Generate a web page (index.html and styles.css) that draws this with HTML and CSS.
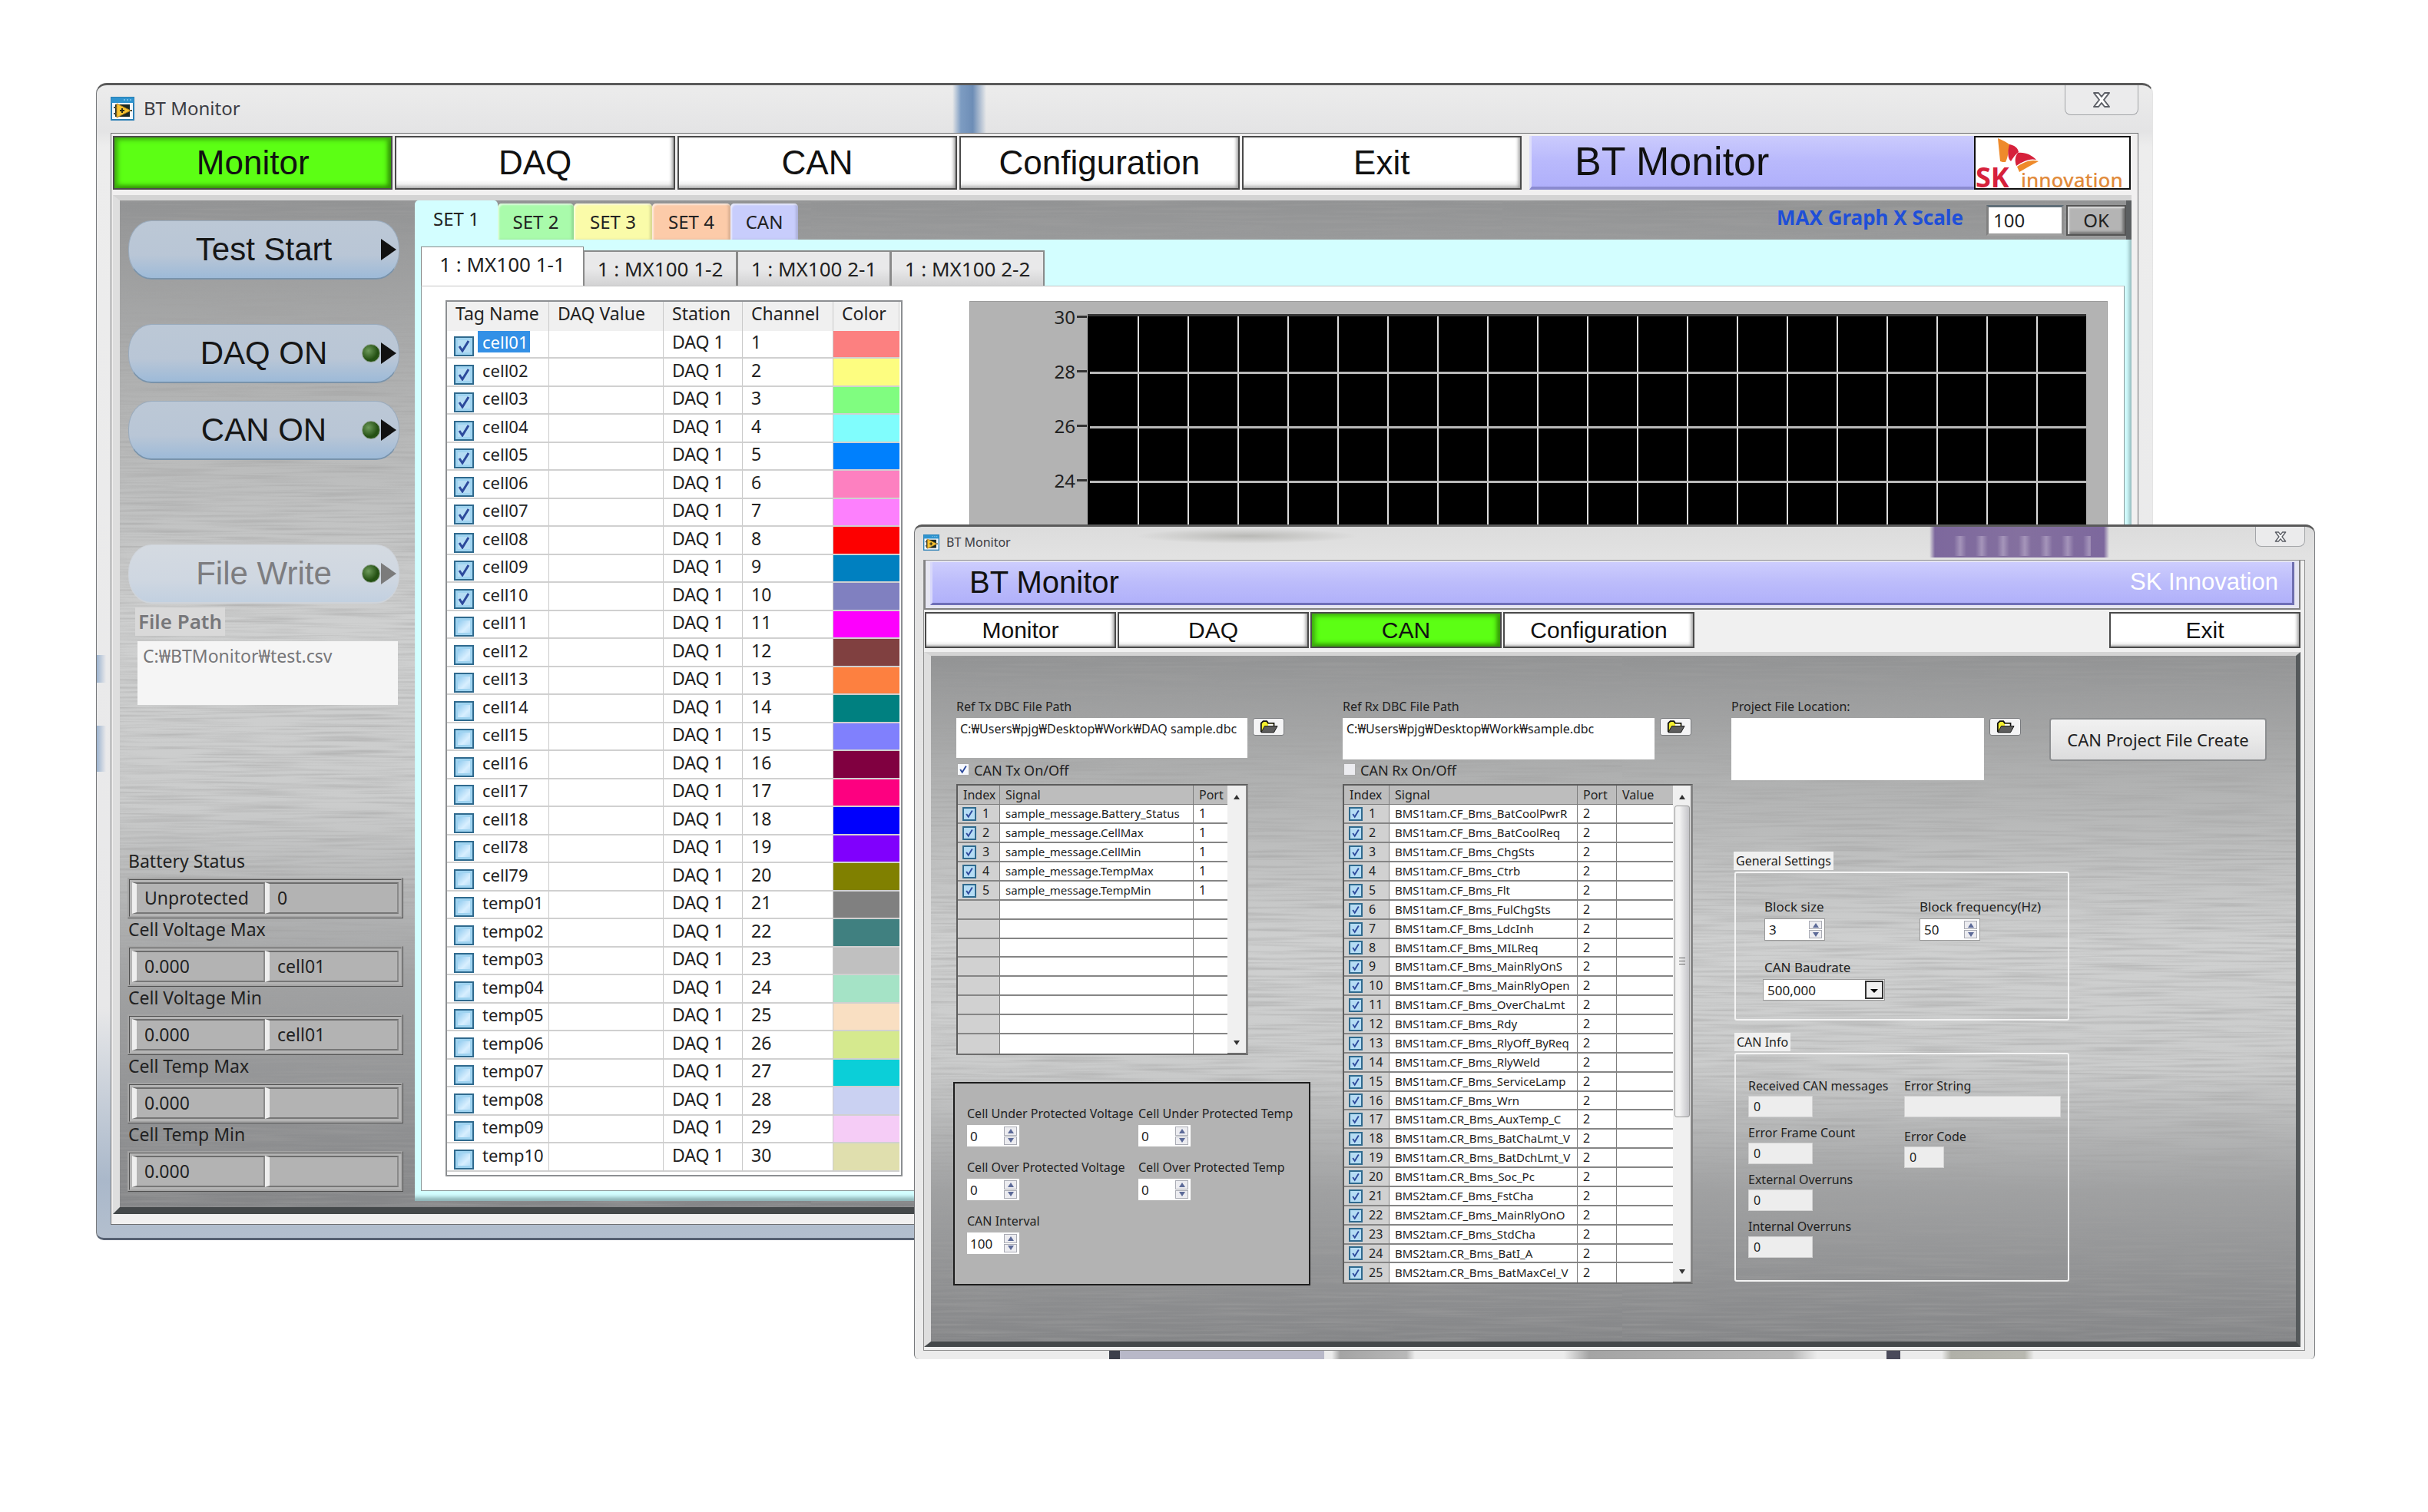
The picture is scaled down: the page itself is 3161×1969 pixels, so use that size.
FILE: index.html
```html
<!DOCTYPE html>
<html lang="en">
<head>
<meta charset="utf-8">
<title>BT Monitor</title>
<link rel="stylesheet" href="styles.css">
</head>
<body>
<svg class="defs" width="0" height="0" aria-hidden="true">
  <symbol id="app-icon" viewBox="0 0 31 31">
    <rect x="1" y="1" width="29" height="29" fill="#f4f8fb" stroke="#2b7fb5" stroke-width="2"/>
    <rect x="1" y="1" width="29" height="7" fill="#2f94cf"/>
    <path d="M17 4h2M21 4h2M25 4h2" stroke="#bfe3f7" stroke-width="1"/>
    <rect x="6" y="10" width="19" height="16" fill="#1c2a26"/>
    <path d="M4 14h5M4 22h5M22 18h6" stroke="#4a4a3a" stroke-width="2"/>
    <path d="M8 9l18 9-18 9z" fill="#f7c433" stroke="#b5801c" stroke-width="1"/>
    <path d="M12 18h6M15 15v6" stroke="#2d2d1a" stroke-width="2"/>
  </symbol>
  <symbol id="close-icon" viewBox="0 0 24 20">
    <path d="M2 1h6l4 5 4-5h6l-7 9 7 9h-6l-4-5-4 5H2l7-9z" fill="#fff" stroke="#5c5f66" stroke-width="2" stroke-linejoin="round"/>
  </symbol>
  <symbol id="folder-icon" viewBox="0 0 26 18">
    <path d="M2 16V4l3-3h5l2 3h8v4" fill="#f3ee2e" stroke="#111" stroke-width="2"/>
    <path d="M12 5h7v3h-7z" fill="#fff"/>
    <path d="M2 17L7 8h18l-5 9z" fill="#5d5d5d" stroke="#111" stroke-width="1"/>
  </symbol>
  <symbol id="up-icon" viewBox="0 0 8 6"><path d="M4 0l4 6H0z"/></symbol>
  <symbol id="down-icon" viewBox="0 0 8 6"><path d="M0 0h8L4 6z"/></symbol>
</svg>

<main class="desktop">
  <section class="window monitor">
    <header class="titlebar">
      <svg class="app-icon"><use href="#app-icon"/></svg>
      <span class="title">BT Monitor</span>
      <button class="close" aria-label="Close"><svg><use href="#close-icon"/></svg></button>
    </header>
    <div class="frame">
      <nav class="nav">
        <button class="nav-btn active">Monitor</button>
        <button class="nav-btn">DAQ</button>
        <button class="nav-btn">CAN</button>
        <button class="nav-btn">Configuration</button>
        <button class="nav-btn">Exit</button>
        <h1 class="brand">BT Monitor</h1>
        <svg class="logo" viewBox="0 0 204 70">
          <path d="M31 3c7 3 13 6 16 9-3 7-2 15-6 22-3 0-5 0-7-1z" fill="#ee8a2b"/>
          <path d="M46 11c6 1 11 4 12 10-4 3-7 7-10 12-5-4-4-14-2-22z" fill="#d6213b"/>
          <path d="M84 33c-9 5-17 9-25 14l-3-7c9-6 18-10 28-7z" fill="#ee8a2b"/>
          <path d="M57 22c10-1 18 3 24 9-9-2-17 2-26 8-2-6-2-12 2-17z" fill="#d6213b"/>
          <text class="logo-sk" x="2" y="67">SK</text>
          <text class="logo-name" x="61" y="67">innovation</text>
        </svg>
      </nav>
      <div class="panel">
        <aside class="sidebar">
          <button class="pill">Test Start<svg class="play" viewBox="0 0 20 28"><path d="M0 0l20 14L0 28z"/></svg></button>
          <button class="pill daq-on">DAQ ON<i class="led"></i><svg class="play" viewBox="0 0 20 28"><path d="M0 0l20 14L0 28z"/></svg></button>
          <button class="pill can-on">CAN ON<i class="led"></i><svg class="play" viewBox="0 0 20 28"><path d="M0 0l20 14L0 28z"/></svg></button>
          <div class="file-write">
            <button class="pill" disabled>File Write<i class="led"></i><svg class="play" viewBox="0 0 20 28"><path d="M0 0l20 14L0 28z"/></svg></button>
            <label class="file-label" for="file-path">File Path</label>
            <textarea id="file-path" class="file-path" disabled>C:₩BTMonitor₩test.csv</textarea>
          </div>
          <div class="readouts">
            <span class="readout-label">Battery Status</span>
            <div class="readout"><output>Unprotected</output><output>0</output></div>
            <span class="readout-label">Cell Voltage Max</span>
            <div class="readout"><output>0.000</output><output>cell01</output></div>
            <span class="readout-label">Cell Voltage Min</span>
            <div class="readout"><output>0.000</output><output>cell01</output></div>
            <span class="readout-label">Cell Temp Max</span>
            <div class="readout"><output>0.000</output><output></output></div>
            <span class="readout-label">Cell Temp Min</span>
            <div class="readout"><output>0.000</output><output></output></div>
          </div>
        </aside>
        <div class="sets">
          <div class="set-bar">
            <div class="set-tabs" role="tablist">
              <button class="set-tab set-1" role="tab">SET 1</button>
              <button class="set-tab set-2" role="tab">SET 2</button>
              <button class="set-tab set-3" role="tab">SET 3</button>
              <button class="set-tab set-4" role="tab">SET 4</button>
              <button class="set-tab set-can" role="tab">CAN</button>
            </div>
            <label class="scale-label" for="scale">MAX Graph X Scale</label>
            <input id="scale" class="scale-input" value="100">
            <button class="ok">OK</button>
          </div>
          <div class="set-body">
            <div class="unit-tabs" role="tablist">
              <button class="unit-tab selected" role="tab">1 : MX100 1-1</button>
              <button class="unit-tab" role="tab">1 : MX100 1-2</button>
              <button class="unit-tab" role="tab">1 : MX100 2-1</button>
              <button class="unit-tab" role="tab">1 : MX100 2-2</button>
            </div>
            <div class="pane">
              <table class="tags">
                <thead><tr><th>Tag Name</th><th>DAQ Value</th><th>Station</th><th>Channel</th><th>Color</th></tr></thead>
                <tbody id="tag-rows"></tbody>
              </table>
              <div class="chart">
                <ol class="axis"><li>30</li><li>28</li><li>26</li><li>24</li></ol>
                <div class="plot"></div>
              </div>
            </div>
          </div>
        </div>
      </div>
    </div>
  </section>

  <section class="window can">
    <header class="titlebar">
      <svg class="app-icon"><use href="#app-icon"/></svg>
      <span class="title">BT Monitor</span>
      <button class="close" aria-label="Close"><svg><use href="#close-icon"/></svg></button>
    </header>
    <div class="frame">
      <div class="banner"><div class="banner-face"><h2>BT Monitor</h2><span>SK Innovation</span></div></div>
      <nav class="nav">
        <button class="nav-btn">Monitor</button>
        <button class="nav-btn">DAQ</button>
        <button class="nav-btn active">CAN</button>
        <button class="nav-btn">Configuration</button>
        <button class="nav-btn exit">Exit</button>
      </nav>
      <div class="panel">
        <div class="column">
          <label for="tx-path">Ref Tx DBC File Path</label>
          <div class="path-row">
            <textarea id="tx-path" class="tx-path">C:₩Users₩pjg₩Desktop₩Work₩DAQ sample.dbc</textarea>
            <button class="browse" aria-label="Browse Tx file"><svg><use href="#folder-icon"/></svg></button>
          </div>
          <label class="toggle"><input type="checkbox" checked>CAN Tx On/Off</label>
          <div class="grid-box tx-box">
            <table class="signals tx">
              <thead><tr><th>Index</th><th>Signal</th><th>Port</th></tr></thead>
              <tbody id="tx-rows"></tbody>
            </table>
            <div class="scroll"><svg><use href="#up-icon"/></svg><svg><use href="#down-icon"/></svg></div>
          </div>
          <div class="protect">
            <div class="field"><label for="cuv">Cell Under Protected Voltage</label><span class="spin"><input id="cuv" value="0"><span class="arrows"><button aria-label="Up"><svg><use href="#up-icon"/></svg></button><button aria-label="Down"><svg><use href="#down-icon"/></svg></button></span></span></div>
            <div class="field"><label for="cut">Cell Under Protected Temp</label><span class="spin"><input id="cut" value="0"><span class="arrows"><button aria-label="Up"><svg><use href="#up-icon"/></svg></button><button aria-label="Down"><svg><use href="#down-icon"/></svg></button></span></span></div>
            <div class="field"><label for="cov">Cell Over Protected Voltage</label><span class="spin"><input id="cov" value="0"><span class="arrows"><button aria-label="Up"><svg><use href="#up-icon"/></svg></button><button aria-label="Down"><svg><use href="#down-icon"/></svg></button></span></span></div>
            <div class="field"><label for="cot">Cell Over Protected Temp</label><span class="spin"><input id="cot" value="0"><span class="arrows"><button aria-label="Up"><svg><use href="#up-icon"/></svg></button><button aria-label="Down"><svg><use href="#down-icon"/></svg></button></span></span></div>
            <div class="field"><label for="interval">CAN Interval</label><span class="spin"><input id="interval" value="100"><span class="arrows"><button aria-label="Up"><svg><use href="#up-icon"/></svg></button><button aria-label="Down"><svg><use href="#down-icon"/></svg></button></span></span></div>
          </div>
        </div>

        <div class="column">
          <label for="rx-path">Ref Rx DBC File Path</label>
          <div class="path-row">
            <textarea id="rx-path" class="rx-path">C:₩Users₩pjg₩Desktop₩Work₩sample.dbc</textarea>
            <button class="browse" aria-label="Browse Rx file"><svg><use href="#folder-icon"/></svg></button>
          </div>
          <label class="toggle"><input type="checkbox">CAN Rx On/Off</label>
          <div class="grid-box rx-box">
            <table class="signals rx">
              <thead><tr><th>Index</th><th>Signal</th><th>Port</th><th>Value</th></tr></thead>
              <tbody id="rx-rows"></tbody>
            </table>
            <div class="scroll"><svg><use href="#up-icon"/></svg><div class="thumb"></div><svg><use href="#down-icon"/></svg></div>
          </div>
        </div>

        <div class="column">
          <label for="project-path">Project File Location:</label>
          <div class="path-row">
            <textarea id="project-path" class="project-path"></textarea>
            <button class="browse" aria-label="Browse project file"><svg><use href="#folder-icon"/></svg></button>
            <button class="create">CAN Project File Create</button>
          </div>
          <h3 class="group-title settings-title">General Settings</h3>
          <div class="group settings">
            <div class="field"><label for="block-size">Block size</label><span class="spin"><input id="block-size" value="3"><span class="arrows"><button aria-label="Up"><svg><use href="#up-icon"/></svg></button><button aria-label="Down"><svg><use href="#down-icon"/></svg></button></span></span></div>
            <div class="field"><label for="block-freq">Block frequency(Hz)</label><span class="spin"><input id="block-freq" value="50"><span class="arrows"><button aria-label="Up"><svg><use href="#up-icon"/></svg></button><button aria-label="Down"><svg><use href="#down-icon"/></svg></button></span></span></div>
            <div class="field"><label for="baud">CAN Baudrate</label><select id="baud" class="baud"><option>500,000</option></select></div>
          </div>
          <h3 class="group-title info-title">CAN Info</h3>
          <div class="group info">
            <div class="info-col">
              <div class="field"><label for="received">Received CAN messages</label><input id="received" readonly value="0"></div>
              <div class="field"><label for="frames">Error Frame Count</label><input id="frames" readonly value="0"></div>
              <div class="field"><label for="ext">External Overruns</label><input id="ext" readonly value="0"></div>
              <div class="field"><label for="int">Internal Overruns</label><input id="int" readonly value="0"></div>
            </div>
            <div class="info-col errors">
              <div class="field"><label for="err-str">Error String</label><input id="err-str" class="wide" readonly></div>
              <div class="field"><label for="err-code">Error Code</label><input id="err-code" class="narrow" readonly value="0"></div>
            </div>
          </div>
        </div>
      </div>
    </div>
    <div class="glass-foot"></div>
  </section>
</main>
<script src="rows.js"></script>
</body>
</html>
```
FILE: styles.css
```css
* { box-sizing: border-box; }

body {
  margin: 0;
  background: #fff;
  color: #222;
  font-family: "Noto Sans", "Noto Sans CJK KR", sans-serif;
  font-size: 22px;
}

button, input, textarea, select {
  margin: 0;
  padding: 0;
  border: 0;
  border-radius: 0;
  color: inherit;
  font: inherit;
  outline: 0;
}

h1, h2, h3 { margin: 0; font-weight: 400; }
textarea { display: block; resize: none; overflow: hidden; }
.defs { position: absolute; }
.desktop { position: relative; min-height: 100vh; }

/* windows */
.window {
  position: absolute;
  border: 1px solid #77797c;
  border-top: 3px solid #5a5a5a;
}

.monitor {
  top: 108px;
  left: 125px;
  right: 358px;
  padding: 0 18px 17px;
  border-right-color: #e4e4e4;
  border-bottom: 3px solid #566172;
  border-radius: 14px 14px 10px 10px;
  background:
    linear-gradient(90deg, transparent, #7d9cc2 25%, #6d8db6 60%, transparent) 1114px 0 / 44px 62px no-repeat,
    linear-gradient(90deg, #9db4d0, #e9e9ea) 0 742px / 12px 36px no-repeat,
    linear-gradient(90deg, #9db4d0, #e9e9ea) 0 834px / 12px 60px no-repeat,
    linear-gradient(#ececec 0, #e4e4e5 60px, #ededed 80px, #e8e8e9 80%, #aab8ca 95%, #b3bfce 100%);
}

.can {
  top: 683px;
  left: 1190px;
  right: 147px;
  padding: 0 12px 0 11px;
  border-bottom: 0;
  border-radius: 10px 12px 6px 6px;
  background: linear-gradient(#dcdcdc, #e2e2e2 40px, #ececec);
}

.titlebar { display: flex; align-items: center; }
.titlebar .title { flex: 1; padding-bottom: 3px; color: #3c3c44; }
.close {
  display: flex;
  align-self: flex-start;
  align-items: center;
  justify-content: center;
  border: 1px solid #a3a5a8;
  border-top: 0;
  border-radius: 0 0 8px 8px;
  background: #ebebec;
}

.monitor .titlebar { height: 62px; font-size: 24px; }
.monitor .app-icon { width: 31px; height: 31px; margin: 0 12px 2px 0; }
.monitor .close { width: 96px; height: 39px; }
.monitor .close svg { width: 24px; height: 20px; }

.can .titlebar {
  height: 43px;
  font-size: 16px;
  background:
    radial-gradient(ellipse at center, #b9b9b6, transparent 70%) 276px 2px / 290px 20px no-repeat,
    repeating-linear-gradient(90deg, transparent 0 12px, #b7a9c8aa 20px, transparent 28px) 1330px 12px / 190px 26px no-repeat,
    linear-gradient(90deg, transparent, #7d689d 3%, #84709f 50%, #7d689d 97%, transparent) 1310px 0 / 234px 40px no-repeat;
}
.can .app-icon { width: 21px; height: 21px; margin: 0 9px 2px 0; }
.can .close { width: 65px; height: 26px; }
.can .close svg { width: 16px; height: 14px; }

/* button bars */
.nav-btn {
  border: 2px solid #4a4a4a;
  background: linear-gradient(#fff 84%, #f0f0f0 92%, #b4b4b4);
  box-shadow: inset -4px 0 4px -2px #999;
  color: #111;
  font-family: "Liberation Sans", Arial, sans-serif;
}
.nav-btn.active {
  background: #5cff14;
  box-shadow: inset 6px 0 6px -2px #3faa10, inset 0 5px 6px -2px #43b512, inset -6px 0 6px -2px #2f8a06, inset 0 -6px 6px -3px #2f8a06;
}

/* brushed metal */
.panel {
  border-style: solid;
  border-color: #d4d4d4 #55595b #44484a #dedede;
  background:
    url("data:image/svg+xml,%3Csvg xmlns='http://www.w3.org/2000/svg' width='900' height='450'%3E%3Cfilter id='n'%3E%3CfeTurbulence type='fractalNoise' baseFrequency='.008 .3' numOctaves='2' seed='4' stitchTiles='stitch'/%3E%3CfeColorMatrix values='0 0 0 0 .35 0 0 0 0 .35 0 0 0 0 .35 1.1 0 0 0 -.45'/%3E%3C/filter%3E%3Crect width='900' height='450' filter='url(%23n)'/%3E%3C/svg%3E"),
    linear-gradient(#929394, #b0b1b1 18%, #cfd0d0 42%, #cbcccc 60%, #a0a1a2 78%, #858688);
}

/* monitor window */
.monitor .frame {
  padding: 3px 9px 13px 2px;
  border: 1px solid #6f7072;
  background: #f1f0f0;
}
.monitor .nav {
  display: grid;
  grid-template-columns: repeat(5, 365fr) 584fr 204px;
  column-gap: 3px;
  height: 70px;
}
.monitor .nav-btn { font-size: 44px; }
.brand {
  margin: 0 -3px 0 7px;
  padding-left: 56px;
  border-bottom: 4px solid #8a8ad0;
  border-left: 3px solid #dedefa;
  background: linear-gradient(#cbcbfd, #b9b9fc 50%, #b0b0fb);
  color: #111;
  font: 52px/66px "Liberation Sans", Arial, sans-serif;
}
.logo { width: 204px; height: 70px; outline: 2px solid #111; outline-offset: -2px; background: #fff; }
.logo-sk { fill: #d6213b; font-size: 36px; font-weight: 700; }
.logo-name { fill: #e18a3a; font-size: 26px; font-weight: 500; }

.monitor .panel {
  display: grid;
  grid-template-columns: 384px 1fr;
  margin: 7px -1px 0 0;
  border-width: 7px 0 9px 9px;
}

.sidebar { padding: 26px 15px 0 11px; }
.pill {
  display: flex;
  position: relative;
  align-items: center;
  justify-content: center;
  width: 353px;
  height: 77px;
  border: 1px solid #9aabbd;
  border-bottom: 2px solid #7993ab;
  border-radius: 30px / 36px;
  background: linear-gradient(#bcc8d6, #b9c6d6 60%, #9dbad8);
  color: #161616;
  font: 42px "Liberation Sans", Arial, sans-serif;
}
.pill:disabled { color: #7d7d80; opacity: 1; border-color: #cfd4da; background: linear-gradient(#d4dae1, #cfd7e1 60%, #c2d0e0); }
.play { position: absolute; right: 3px; width: 20px; height: 28px; fill: #111; }
.pill:disabled .play { fill: #7b7b7b; }
.led {
  position: absolute;
  right: 24px;
  width: 24px;
  height: 24px;
  border: 1px solid #8fa08f;
  border-radius: 50%;
  background: radial-gradient(circle at 35% 35%, #6d9a5a, #234f12 60%, #2f5f20);
}
.daq-on { margin-top: 58px; }
.can-on { margin-top: 23px; }
.file-write { display: flex; flex-direction: column; align-items: flex-start; margin-top: 110px; }
.file-label {
  margin: 5px 0 7px 9px;
  padding: 0 4px;
  background: #d9d9d9;
  color: #77777a;
  font-size: 26px;
  font-weight: 600;
  line-height: 37px;
}
.file-path {
  width: 339px;
  height: 83px;
  margin-left: 12px;
  padding: 2px 7px;
  background: #f5f5f5;
  color: #77777a;
  font-size: 23px;
  line-height: 34px;
}
.readouts { margin-top: 189px; }
.readout-label { display: block; padding-bottom: 8px; font-size: 23px; line-height: 28px; }
.readout {
  display: grid;
  grid-template-columns: 173px 1fr;
  height: 53px;
  margin-left: -1px;
  border: 3px ridge #a4a4a4;
  padding: 3px;
  background: #b4b4b4;
}
.readout output {
  padding-left: 10px;
  border: 2px solid;
  border-color: #6d6d6d #8a8a8a #777 #eee;
  border-left-width: 6px;
  background: #b3b3b3;
  font-size: 23px;
  line-height: 36px;
}

.sets { min-width: 0; padding-bottom: 8px; }
.set-bar { display: flex; align-items: center; height: 51px; border-right: 7px solid #5c5f61; }
.set-tabs { display: flex; flex: 1; align-items: flex-end; align-self: stretch; }
.set-tab {
  width: 102px;
  height: 47px;
  border-radius: 5px 5px 0 0;
  box-shadow: inset 2px 2px 2px #fff9, inset -3px 0 3px #0002;
  font-size: 24px;
}
.set-1 { width: 108px; height: 51px; padding-bottom: 5px; background: #d3feff; box-shadow: none; }
.set-2 { width: 99px; background: #a9fbab; }
.set-3 { background: #fafba9; }
.set-4 { background: #fccba9; }
.set-can { width: 88px; background: #c8cdfc; }
.scale-label { margin: 0 30px 8px 0; color: #1f4fd8; font-size: 26px; font-weight: 700; }
.scale-input {
  width: 101px;
  height: 40px;
  padding-left: 6px;
  border: 3px solid;
  border-color: #5f6e78 #909090 #a0a0a0 #808080;
  background: #fff;
  font-size: 24px;
}
.ok { width: 78px; height: 40px; margin-left: 3px; border: 2px solid #555; background: #b4b4b4; box-shadow: inset 2px 2px 2px #ddd, inset -3px -3px 3px #777; font-size: 24px; }
.set-body { padding: 9px 9px 13px 8px; background: #d3feff; box-shadow: inset -3px -5px 5px #8fb5b8; }
.unit-tabs { display: flex; align-items: flex-end; }
.unit-tab {
  width: 200px;
  height: 46px;
  border: 2px solid #8a8a8a;
  border-bottom: 0;
  border-left-width: 1px;
  background: linear-gradient(#e9e9ea 50%, #d2d2d3);
  font-size: 26px;
}
.unit-tab.selected { width: 212px; height: 51px; padding-bottom: 6px; border-width: 1px 1px 0; background: #fff; }
.pane {
  display: flex;
  gap: 87px;
  padding: 18px 21px 18px 31px;
  border: 1px solid #8d9a9b;
  border-top-color: #c5c5c5;
  background: #fff;
}

.tags {
  flex: none;
  width: 595px;
  border: 2px solid #8c8f92;
  border-collapse: separate;
  border-spacing: 0;
  table-layout: fixed;
  padding-right: 2px;
  padding-bottom: 4px;
  font-size: 23px;
}
.tags th {
  width: 103px;
  height: 38px;
  padding: 0 0 8px 11px;
  border-right: 1px solid #cacaca;
  background: #f0f0f0;
  font-weight: 400;
  line-height: 30px;
  text-align: left;
}
.tags th:first-child { width: 133px; }
.tags th:nth-child(2) { width: 149px; }
.tags th:nth-child(4) { width: 118px; }
.tags th:last-child { width: 86px; }
.tags td {
  height: 36px;
  padding: 0 0 6px 11px;
  border-right: 1px solid #cacaca;
  border-bottom: 2px solid #d0d0d0;
  line-height: 28px;
}
.tags tr:nth-child(even) td { height: 37px; }
.tags td.swatch { border-right: 0; }
.tags label { display: flex; align-items: center; margin-left: -2px; }
.tags label span { padding: 0 2px 0 6px; font-size: 22px; }
.tags tr:first-child label span { background: #3390e6; color: #fff; }

.tags input, .signals input {
  flex: none;
  appearance: none;
  width: 26px;
  height: 26px;
  border: 2px solid #2f6a8e;
  background: linear-gradient(135deg, #7cc0ea, #d8efff 60%, #a5d5f3);
  box-shadow: inset 0 0 0 3px #9fd3f0;
}
.tags input { align-self: flex-end; margin: 0 5px -5px 0; }
.tags input:checked, .signals input:checked {
  background: url("data:image/svg+xml,%3Csvg xmlns='http://www.w3.org/2000/svg' viewBox='0 0 22 22'%3E%3Cpath d='M5 11l4 6 8-13' fill='none' stroke='%232d4a9c' stroke-width='3'/%3E%3C/svg%3E") center / 100% no-repeat, #b5dcf4;
}

.chart { display: flex; flex: 1; margin-top: 1px; padding: 0 27px 0 0; border: 1px solid #9c9c9c; background: #b3b3b3; }
.axis { width: 153px; margin: -16px 0 0; padding: 0; list-style: none; font-size: 24px; line-height: 71px; }
.axis li { display: flex; align-items: center; justify-content: flex-end; height: 71px; }
.axis li::after { width: 13px; height: 3px; margin: 0 1px 0 2px; background: #333; content: ""; }
.plot {
  flex: 1;
  margin: 16px 0;
  border-top: 3px solid #333;
  background:
    linear-gradient(#000, #000) 0 0 / 3px 100% no-repeat,
    linear-gradient(#b9b9b9, #b9b9b9) 0 72px / 100% 3px no-repeat,
    linear-gradient(#b9b9b9, #b9b9b9) 0 143px / 100% 3px no-repeat,
    linear-gradient(#b9b9b9, #b9b9b9) 0 214px / 100% 3px no-repeat,
    repeating-linear-gradient(90deg, #ddd 0 2px, #000 2px 5%);
}

/* CAN window */
.can .frame { padding: 0 5px 4px 0; border: 1px solid #8d8d8d; background: #f0f0f0; }
.banner { padding: 2px 6px 4px; border: 2px solid #828282; border-top: 0; background: #e6e6f2; }
.banner-face {
  display: flex;
  align-items: center;
  justify-content: space-between;
  height: 56px;
  padding: 0 18px 0 48px;
  border-bottom: 3px solid #6f6fb8;
  border-right: 3px solid #6f6fb0;
  border-left: 3px solid #d8d8fa;
  background: linear-gradient(#cdcdfd, #bcbcfb 50%, #b1b1fa);
  font-family: "Liberation Sans", Arial, sans-serif;
}
.banner h2 { font-size: 40px; color: #111; }
.banner span { padding-bottom: 2px; font-size: 31px; color: #fff; }
.can .nav {
  display: grid;
  grid-template-columns: repeat(4, 249px) 1fr 249px;
  column-gap: 2px;
  height: 47px;
  margin: 3px 0 5px 1px;
}
.can .nav-btn { font-size: 30px; }
.can .exit { grid-column: 6; }
.can .panel {
  display: grid;
  grid-template-columns: 503px 506px 1fr;
  padding: 55px 0 73px 33px;
  border-width: 5px 6px 7px 9px;
  font-size: 16px;
}
.glass-foot {
  height: 11px;
  margin: 0 -8px;
  background:
    linear-gradient(#3c3f4a, #3c3f4a) 250px 0 / 14px 100% no-repeat,
    linear-gradient(#b8b8c8, #b8b8c8) 264px 0 / 266px 100% no-repeat,
    linear-gradient(90deg, transparent, #a4a4a4 10%, #b8b8b8 90%, transparent) 540px 0 / 108px 100% no-repeat,
    linear-gradient(90deg, transparent, #a4a4a4 10%, #b8b8b8 90%, transparent) 842px 0 / 330px 100% no-repeat,
    linear-gradient(#4a4a5a, #4a4a5a) 1262px 0 / 18px 100% no-repeat,
    linear-gradient(90deg, transparent, #b0b0a8 10%, #b8b8b0 90%, transparent) 1334px 0 / 120px 100% no-repeat;
}

.column > label, .field label { display: block; line-height: 22px; }
.path-row { display: flex; align-items: flex-start; gap: 7px; height: 54px; margin-top: 4px; }
.path-row textarea { height: 54px; padding: 2px 5px; background: #fff; font-size: 16px; line-height: 24px; }
.path-row .tx-path { width: 379px; height: 52px; }
.path-row .rx-path { width: 406px; }
.path-row .project-path { width: 329px; height: 81px; }
.browse {
  display: flex;
  align-items: center;
  justify-content: center;
  width: 41px;
  height: 23px;
  border: 1px solid #77797c;
  border-radius: 3px;
  background: #f4f4f5;
}
.browse svg { width: 24px; height: 17px; }
.create {
  width: 283px;
  height: 56px;
  margin-left: 30px;
  border: 2px solid #8c8e90;
  border-radius: 4px;
  background: linear-gradient(#f1f1f1, #e8e8e8 50%, #dcdcdd);
  font-size: 22px;
}

.column > .toggle { display: flex; align-items: center; gap: 6px; height: 24px; margin: 2px 0 6px 1px; font-size: 18px; }
.toggle input {
  appearance: none;
  width: 16px;
  height: 16px;
  margin-bottom: 3px;
  border: 1px solid #aaa;
  background: #ececf0;
}
.toggle input:checked {
  background: url("data:image/svg+xml,%3Csvg xmlns='http://www.w3.org/2000/svg' viewBox='0 0 22 22'%3E%3Cpath d='M5 11l4 6 8-13' fill='none' stroke='%232d4a9c' stroke-width='3'/%3E%3C/svg%3E") center / 100% no-repeat, #f6f8fc;
}

.grid-box { display: flex; border: solid; border-color: #5c5c5c #858585 #6d6d6d #5c5c5c; border-width: 2px 3px 3px 2px; background: #f0f0f0; }
.tx-box { width: 380px; height: 353px; }
.rx-box { width: 456px; height: 651px; }
.signals { flex: none; border-spacing: 0; table-layout: fixed; }
.tx { width: 351px; }
.rx { width: 428px; }
.signals th {
  height: 25px;
  padding: 0 0 0 7px;
  border-right: 1px solid #7d7d7d;
  border-bottom: 1px solid #7d7d7d;
  background: #bdbdbd;
  font-weight: 400;
  line-height: 24px;
  text-align: left;
}
.tx th:first-child { width: 55px; }
.tx th:nth-child(3) { width: 44px; }
.rx th:first-child { width: 59px; }
.rx th:nth-child(3) { width: 51px; }
.rx th:nth-child(4) { width: 73px; }
.signals td {
  height: 25px;
  padding: 0 0 0 7px;
  overflow: hidden;
  border-right: 1px solid #7d7d7d;
  border-bottom: 2px solid #858585;
  background: #fff;
  line-height: 23px;
  white-space: nowrap;
}
.signals th:last-child, .signals td:last-child { border-right: 0; }
.signals tr:nth-child(8n) td { height: 24px; line-height: 22px; }
.signals tr:last-child td { border-bottom: 0; }
.signals td:first-child { background: #d1d1d1; }
.signals td:nth-child(2) { font-size: 15px; }
.signals label { display: flex; align-items: center; gap: 8px; margin-left: -1px; }
.signals input { width: 18px; height: 18px; box-shadow: none; }
.scroll { display: flex; flex: 1; flex-direction: column; align-items: center; justify-content: space-between; padding: 12px 0 10px; }
.scroll svg { width: 8px; height: 6px; fill: #333; }
.thumb {
  flex: none;
  width: 20px;
  height: 406px;
  margin: 8px 0 auto;
  border: 1px solid #999;
  border-radius: 3px;
  background:
    repeating-linear-gradient(#666 0 1px, transparent 1px 4px) center / 8px 10px no-repeat,
    linear-gradient(90deg, #f3f3f3 30%, #c4c4c8);
}

.protect {
  display: grid;
  grid-template-columns: 223px 1fr;
  gap: 16px 0;
  align-content: start;
  width: 465px;
  height: 265px;
  margin: 35px 0 0 -4px;
  padding: 28px 0 0 16px;
  border: 2px solid #1d1d1d;
  background: #b3b3b3;
}
.field label { white-space: nowrap; }
.spin { display: flex; width: 68px; height: 28px; margin-top: 4px; padding: 2px 3px 2px 4px; background: #fff; }
.spin input { flex: 1; min-width: 0; background: none; font-size: 17px; }
.arrows { display: grid; width: 17px; gap: 1px; }
.arrows button { display: flex; align-items: center; justify-content: center; border: 1px solid #a9abb4; background: #ececf0; }
.arrows svg { width: 8px; height: 6px; fill: #5c6a98; }

.group-title { width: max-content; padding: 0 3px; background: #f0f0f0; font-size: 16px; line-height: 24px; }
.settings-title { margin-top: 120px; margin-left: 3px; }
.info-title { margin-top: 16px; margin-left: 4px; }
.group { width: 436px; margin: 2px 0 0 4px; border: 2px solid #f4f4f4; border-radius: 3px; }
.settings { display: grid; grid-template-columns: 202px 1fr; gap: 24px 0; align-content: start; height: 194px; padding: 33px 0 0 37px; }
.settings label { font-size: 17px; }
.settings .spin { width: 79px; height: 29px; padding-left: 5px; border: 1px solid #999; }
.baud {
  appearance: none;
  width: 159px;
  height: 28px;
  margin: 4px 0 0 -2px;
  padding-left: 5px;
  border: 1px solid #999;
  background:
    url("data:image/svg+xml,%3Csvg xmlns='http://www.w3.org/2000/svg' viewBox='0 0 24 24'%3E%3Crect x='1' y='1' width='22' height='22' fill='%23f0f0f0' stroke='%23333' stroke-width='2'/%3E%3Cpath d='M7 11h10l-5 5z'/%3E%3C/svg%3E") right 1px center / 24px 24px no-repeat, #fff;
  font-size: 17px;
}
.info { display: flex; height: 298px; padding: 30px 0 0 16px; }
.info-col { display: flex; flex-direction: column; gap: 9px; width: 203px; }
.info-col.errors { gap: 14px; }
.info input { display: block; width: 84px; height: 28px; margin-top: 2px; padding-left: 6px; border: 1px solid #d2d2d2; background: #ededed; }
.info .wide { width: 204px; }
.info .narrow { width: 52px; }
```
FILE: rows.js
```js
const colors = ['#fc8080', '#fdfd80', '#80fd80', '#80fdfd', '#0080fd', '#fd80c0', '#fd80fd', '#fd0000', '#0080c0', '#8080c0',
  '#fd00fd', '#804040', '#fd8040', '#008080', '#8080fd', '#800040', '#fd0080', '#0000fd', '#8000fd', '#808000',
  '#808080', '#408080', '#c0c0c0', '#a5e3c6', '#f9dfc2', '#d5e98e', '#0bcfd8', '#cad1f2', '#f5ccf6', '#e0dfae'];

const pad = n => String(n).padStart(2, '0');
const tagName = i => i < 18 ? 'cell' + pad(i + 1) : i < 20 ? 'cell' + (i + 60) : 'temp' + pad(i - 19);

document.getElementById('tag-rows').innerHTML = colors.map((color, i) =>
  `<tr><td><label><input type="checkbox"${i < 10 ? ' checked' : ''}><span>${tagName(i)}</span></label></td><td></td>` +
  `<td>DAQ 1</td><td>${i + 1}</td><td class="swatch" style="background:${color}"></td></tr>`).join('');

const signalRow = (name, index, port, extra) =>
  name
    ? `<tr><td><label><input type="checkbox" checked>${index}</label></td><td>${name}</td><td>${port}</td>${extra}</tr>`
    : `<tr><td></td><td></td><td></td>${extra}</tr>`;

const tx = ['Battery_Status', 'CellMax', 'CellMin', 'TempMax', 'TempMin'].map(s => 'sample_message.' + s);
while (tx.length < 13) tx.push('');
document.getElementById('tx-rows').innerHTML = tx.map((s, i) => signalRow(s, i + 1, 1, '')).join('');

const rx1 = ['CF_Bms_BatCoolPwrR', 'CF_Bms_BatCoolReq', 'CF_Bms_ChgSts', 'CF_Bms_Ctrb', 'CF_Bms_Flt', 'CF_Bms_FulChgSts',
  'CF_Bms_LdcInh', 'CF_Bms_MILReq', 'CF_Bms_MainRlyOnS', 'CF_Bms_MainRlyOpen', 'CF_Bms_OverChaLmt', 'CF_Bms_Rdy',
  'CF_Bms_RlyOff_ByReq', 'CF_Bms_RlyWeld', 'CF_Bms_ServiceLamp', 'CF_Bms_Wrn', 'CR_Bms_AuxTemp_C', 'CR_Bms_BatChaLmt_V',
  'CR_Bms_BatDchLmt_V', 'CR_Bms_Soc_Pc'].map(s => 'BMS1tam.' + s);
const rx2 = ['CF_Bms_FstCha', 'CF_Bms_MainRlyOnO', 'CF_Bms_StdCha', 'CR_Bms_BatI_A', 'CR_Bms_BatMaxCel_V'].map(s => 'BMS2tam.' + s);
document.getElementById('rx-rows').innerHTML = [...rx1, ...rx2].map((s, i) => signalRow(s, i + 1, 2, '<td></td>')).join('');
```
